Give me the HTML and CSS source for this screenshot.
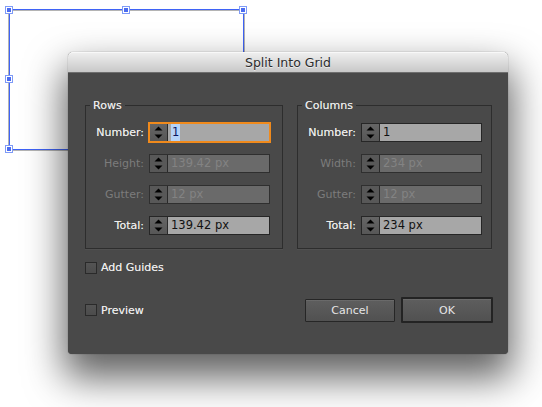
FILE: index.html
```html
<!DOCTYPE html>
<html>
<head>
<meta charset="utf-8">
<title>Split Into Grid</title>
<link rel="stylesheet" href="styles.css">
</head>
<body>
<svg class="defs" width="0" height="0" aria-hidden="true">
  <symbol id="spin" viewBox="0 0 17 17">
    <path class="mid" d="M2 8.5h13"/>
    <path class="tri" d="M4.5 6.5h8L8.5 2.5z"/>
    <path class="tri" d="M4.5 10.5h8L8.5 14.5z"/>
  </symbol>
</svg>
<div class="stage">
  <div class="artboard">
    <div class="obj"></div>
    <div class="sel"></div>
    <span class="handle h-tl"><i></i></span>
    <span class="handle h-tm"><i></i></span>
    <span class="handle h-tr"><i></i></span>
    <span class="handle h-ml"><i></i></span>
    <span class="handle h-bl"><i></i></span>
  </div>

  <div class="dialog">
    <div class="titlebar">Split Into Grid</div>
    <div class="body">
      <div class="groups">
        <fieldset class="group group-rows">
          <legend>Rows</legend>
          <div class="grid">
            <label class="lbl">Number:</label>
            <div class="field focus"><span class="spin"><svg><use href="#spin"/></svg></span><span class="val"><span class="hl">1</span></span></div>
            <label class="lbl off">Height:</label>
            <div class="field disabled"><span class="spin"><svg><use href="#spin"/></svg></span><span class="val">139.42 px</span></div>
            <label class="lbl off">Gutter:</label>
            <div class="field disabled"><span class="spin"><svg><use href="#spin"/></svg></span><span class="val">12 px</span></div>
            <label class="lbl">Total:</label>
            <div class="field"><span class="spin"><svg><use href="#spin"/></svg></span><span class="val">139.42 px</span></div>
          </div>
        </fieldset>
        <fieldset class="group group-cols">
          <legend>Columns</legend>
          <div class="grid">
            <label class="lbl">Number:</label>
            <div class="field"><span class="spin"><svg><use href="#spin"/></svg></span><span class="val">1</span></div>
            <label class="lbl off">Width:</label>
            <div class="field disabled"><span class="spin"><svg><use href="#spin"/></svg></span><span class="val">234 px</span></div>
            <label class="lbl off">Gutter:</label>
            <div class="field disabled"><span class="spin"><svg><use href="#spin"/></svg></span><span class="val">12 px</span></div>
            <label class="lbl">Total:</label>
            <div class="field"><span class="spin"><svg><use href="#spin"/></svg></span><span class="val">234 px</span></div>
          </div>
        </fieldset>
      </div>

      <div class="check-row guides">
        <span class="box"></span><span class="check-label">Add Guides</span>
      </div>

      <div class="footer">
        <div class="check-row">
          <span class="box"></span><span class="check-label">Preview</span>
        </div>
        <div class="buttons">
          <button class="btn">Cancel</button>
          <button class="btn default">OK</button>
        </div>
      </div>
    </div>
  </div>
</div>
</body>
</html>
```

FILE: styles.css
```css
html, body {
  margin: 0;
  padding: 0;
  background: #ffffff;
}

.defs {
  position: absolute;
  width: 0;
  height: 0;
}

.stage {
  position: relative;
  width: 542px;
  height: 407px;
  overflow: hidden;
  font-family: "DejaVu Sans", "Liberation Sans", sans-serif;
}

/* ---------- selected object on the artboard ---------- */
.artboard {
  position: absolute;
  left: 0;
  top: 0;
  width: 260px;
  height: 160px;
}

.obj {
  position: absolute;
  left: 8px;
  top: 10px;
  width: 235px;
  height: 139px;
  border: 1px solid #b4b4b4;
}

.sel {
  position: absolute;
  left: 9px;
  top: 9px;
  width: 233px;
  height: 139px;
  border: 1px solid #3f63f6;
  z-index: 1;
}

.handle {
  position: absolute;
  z-index: 2;
  width: 6px;
  height: 6px;
  border: 1px solid #7f9bf7;
  background: #ffffff;
  display: flex;
  align-items: center;
  justify-content: center;
}

.handle i {
  display: block;
  width: 4px;
  height: 4px;
  background: #4b6cf0;
}

.h-tl { left: 5px; top: 6px; }
.h-tm { left: 122px; top: 6px; }
.h-tr { left: 239px; top: 6px; }
.h-ml { left: 5px; top: 75px; }
.h-bl { left: 5px; top: 145px; }

/* ---------- dialog window ---------- */
.dialog {
  position: absolute;
  z-index: 5;
  left: 68px;
  top: 52px;
  width: 440px;
  height: 302px;
  background: #494949;
  border-radius: 5px 5px 4px 4px;
  box-shadow: 0 20px 38px 4px rgba(0, 0, 0, 0.62), 0 0 1px rgba(0, 0, 0, 0.6);
  display: flex;
  flex-direction: column;
}

.titlebar {
  height: 20px;
  line-height: 21px;
  border-bottom: 1px solid #6e6e6e;
  border-radius: 5px 5px 0 0;
  background: linear-gradient(#f0f0f0, #dcdcdc 50%, #c8c8c8);
  color: #2c2c2c;
  text-align: center;
  font-size: 12.5px;
  text-shadow: 0 1px 0 rgba(255, 255, 255, 0.6);
  box-shadow: inset 0 1px 0 #f8f8f8;
}

.body {
  padding: 26px 16px 0 17px;
  display: flex;
  flex-direction: column;
}

.groups {
  display: flex;
  gap: 14px;
}

.group {
  margin: 0;
  padding: 11px 0 13px 0;
  border: 1px solid #2d2d2d;
  min-width: 0;
  box-shadow: 0 1px 0 rgba(255, 255, 255, 0.04);
}

.group legend {
  margin-left: 4px;
  padding: 0 3px;
  height: 13px;
  line-height: 13px;
  font-size: 11px;
  color: #ececec;
  text-shadow: 0 0 0.5px rgba(255, 255, 255, 0.6);
}

.group-rows { width: 196px; }
.group-cols { width: 193px; }

.grid {
  display: grid;
  grid-template-columns: 58px 121px;
  column-gap: 5px;
  row-gap: 12px;
  align-items: center;
}

.lbl {
  text-align: right;
  font-size: 11px;
  color: #ededed;
  white-space: nowrap;
  text-shadow: 0 0 0.5px rgba(255, 255, 255, 0.6);
}

.lbl.off {
  color: #7c7c7c;
  text-shadow: none;
}

/* ---------- spin field ---------- */
.field {
  box-sizing: border-box;
  height: 19px;
  width: 121px;
  border: 1px solid #262626;
  display: flex;
  background: #a7a7a7;
}

.field.focus {
  border-color: #f08a1c;
  outline: 1px solid #f08a1c;
}

.spin {
  width: 17px;
  flex: none;
  border-right: 1px solid #2a2a2a;
  background: linear-gradient(#656565, #575757);
  display: flex;
}

.spin svg {
  width: 17px;
  height: 17px;
}

.spin .tri { fill: #dedede; }
.spin .mid { stroke: #3e3e3e; stroke-width: 1; }

.val {
  padding-left: 3px;
  font-size: 11.5px;
  line-height: 17px;
  color: #111111;
  white-space: nowrap;
}

.hl {
  display: inline-block;
  background: #b5d3f8;
  color: #0b1660;
  padding: 0 1px;
  line-height: 17px;
}

.field.disabled {
  background: #6a6a6a;
  border-color: #2f2f2f;
}

.field.disabled .spin {
  background: #585858;
}

.field.disabled .tri { fill: #7a7a7a; }

.field.disabled .val {
  color: #838383;
}

/* ---------- checkboxes ---------- */
.check-row {
  display: flex;
  align-items: center;
  height: 13px;
}

.guides {
  margin-top: 12px;
}

.box {
  box-sizing: border-box;
  width: 12px;
  height: 12px;
  border: 1px solid #2a2a2a;
  background: linear-gradient(#545454, #4c4c4c);
  margin-right: 4px;
}

.check-label {
  font-size: 11px;
  color: #ededed;
  text-shadow: 0 0 0.5px rgba(255, 255, 255, 0.6);
}

/* ---------- footer ---------- */
.footer {
  margin-top: 23px;
  height: 26px;
  display: flex;
  align-items: center;
  justify-content: space-between;
}

.buttons {
  display: flex;
  align-items: center;
  gap: 6px;
  margin-right: -1px;
}

.btn {
  box-sizing: border-box;
  width: 90px;
  height: 23px;
  margin: 0;
  padding: 0;
  border: 1px solid #262626;
  border-radius: 1px;
  background: linear-gradient(#5e5e5e, #515151);
  color: #e6e6e6;
  font-family: "DejaVu Sans", "Liberation Sans", sans-serif;
  font-size: 11px;
  box-shadow: inset 0 1px 0 rgba(255, 255, 255, 0.08);
}

.btn.default {
  width: 92px;
  height: 26px;
  border: 2px solid #232323;
}
```
